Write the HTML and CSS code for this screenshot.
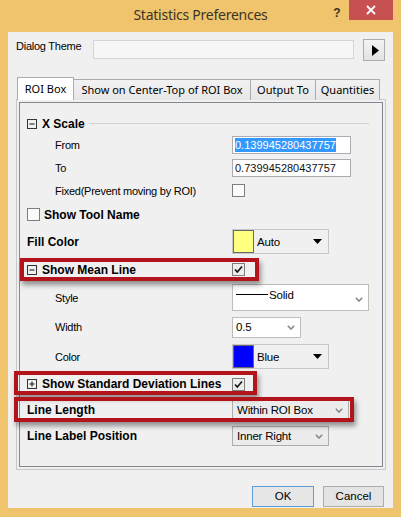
FILE: index.html
```html
<!DOCTYPE html>
<html>
<head>
<meta charset="utf-8">
<link rel="stylesheet" href="styles.css">
</head>
<body>
<div class="window">
  <div class="titlebar">
    <div class="title">Statistics Preferences</div>
    <div class="caption-btns">
      <div class="help">?</div>
      <div class="close"><svg width="10" height="10" viewBox="0 0 10 10"><path d="M1 1 L9 9 M9 1 L1 9" stroke="#fff" stroke-width="1.8"/></svg></div>
    </div>
  </div>
  <div class="client">
    <div class="theme-row">
      <div class="theme-label">Dialog Theme</div>
      <div class="theme-field"></div>
      <div class="theme-btn"><svg width="7" height="11" viewBox="0 0 7 11"><path d="M0 0 L7 5.5 L0 11 Z" fill="#000"/></svg></div>
    </div>
    <div class="tabs">
      <div class="tab tab-roi active">ROI Box</div>
      <div class="tab tab-show">Show on Center-Top of ROI Box</div>
      <div class="tab tab-output">Output To</div>
      <div class="tab tab-quant">Quantities</div>
    </div>
    <div class="tabpanel">
      <div class="panel">
        <div class="grid">
          <div class="row h20 group">
            <svg class="expander" width="10" height="10" viewBox="0 0 10 10"><rect x="0.5" y="0.5" width="9" height="9" fill="none" stroke="#333"/><path d="M2.5 5 H7.5" stroke="#111"/></svg>
            <span class="bold">X Scale</span>
            <span class="group-line"></span>
          </div>

          <div class="lbl indent h22">From</div>
          <div class="ctl h22"><div class="textbox"><span class="sel">0.139945280437757</span></div></div>

          <div class="lbl indent h23">To</div>
          <div class="ctl h23"><div class="textbox">0.739945280437757</div></div>

          <div class="lbl indent h23">Fixed(Prevent moving by ROI)</div>
          <div class="ctl h23"><span class="checkbox"></span></div>

          <div class="row h25 check-row">
            <span class="checkbox"></span>
            <span class="bold">Show Tool Name</span>
          </div>

          <div class="lbl bold h29">Fill Color</div>
          <div class="ctl h29">
            <div class="colorcombo"><span class="swatch swatch-yellow"></span><span class="combo-text">Auto</span><svg class="tri" width="9" height="5" viewBox="0 0 9 5"><path d="M0 0 H9 L4.5 5 Z" fill="#000"/></svg></div>
          </div>

          <div class="lbl h27 expand-label">
            <svg class="expander" width="10" height="10" viewBox="0 0 10 10"><rect x="0.5" y="0.5" width="9" height="9" fill="none" stroke="#333"/><path d="M2.5 5 H7.5" stroke="#111"/></svg>
            <span class="bold">Show Mean Line</span>
          </div>
          <div class="ctl h27"><span class="checkbox checked"><svg width="11" height="11" viewBox="0 0 11 11"><path d="M2 5.5 L4.3 8 L9 2.5" fill="none" stroke="#1a1a1a" stroke-width="1.7"/></svg></span></div>

          <div class="lbl indent h29">Style</div>
          <div class="ctl h29">
            <div class="combo combo-style"><span class="style-val"><span class="dash"></span>Solid</span><svg class="chev" width="8" height="5" viewBox="0 0 8 5"><path d="M0.8 0.8 L4 4 L7.2 0.8" fill="none" stroke="#888" stroke-width="1.6"/></svg></div>
          </div>

          <div class="lbl indent h30">Width</div>
          <div class="ctl h30">
            <div class="combo combo-width"><span class="combo-text">0.5</span><svg class="chev" width="8" height="5" viewBox="0 0 8 5"><path d="M0.8 0.8 L4 4 L7.2 0.8" fill="none" stroke="#888" stroke-width="1.6"/></svg></div>
          </div>

          <div class="lbl indent h29">Color</div>
          <div class="ctl h29">
            <div class="colorcombo"><span class="swatch swatch-blue"></span><span class="combo-text">Blue</span><svg class="tri" width="9" height="5" viewBox="0 0 9 5"><path d="M0 0 H9 L4.5 5 Z" fill="#000"/></svg></div>
          </div>

          <div class="lbl h26 expand-label">
            <svg class="expander" width="10" height="10" viewBox="0 0 10 10"><rect x="0.5" y="0.5" width="9" height="9" fill="none" stroke="#333"/><path d="M2.5 5 H7.5 M5 2.5 V7.5" stroke="#111"/></svg>
            <span class="bold">Show Standard Deviation Lines</span>
          </div>
          <div class="ctl h26"><span class="checkbox checked"><svg width="11" height="11" viewBox="0 0 11 11"><path d="M2 5.5 L4.3 8 L9 2.5" fill="none" stroke="#1a1a1a" stroke-width="1.7"/></svg></span></div>

          <div class="lbl bold h26">Line Length</div>
          <div class="ctl h26">
            <div class="combo combo-grey combo-len"><span class="combo-text">Within ROI Box</span><svg class="chev" width="8" height="5" viewBox="0 0 8 5"><path d="M0.8 0.8 L4 4 L7.2 0.8" fill="none" stroke="#888" stroke-width="1.6"/></svg></div>
          </div>

          <div class="lbl bold h26">Line Label Position</div>
          <div class="ctl h26">
            <div class="combo combo-grey combo-llp"><span class="combo-text">Inner Right</span><svg class="chev" width="8" height="5" viewBox="0 0 8 5"><path d="M0.8 0.8 L4 4 L7.2 0.8" fill="none" stroke="#888" stroke-width="1.6"/></svg></div>
          </div>
        </div>

        <div class="mark mark-mean"></div>
        <div class="mark mark-std"></div>
        <div class="mark mark-len"></div>
      </div>
    </div>
    <div class="buttons">
      <div class="btn btn-default">OK</div>
      <div class="btn">Cancel</div>
    </div>
  </div>
</div>
</body>
</html>
```

FILE: styles.css
```css
html, body {
  margin: 0;
  padding: 0;
}
body {
  width: 401px;
  height: 517px;
  overflow: hidden;
  background: #f0c46c;
  font-family: "Liberation Sans", Arial, sans-serif;
  font-size: 11px;
  color: #000;
}
.window {
  display: flex;
  flex-direction: column;
  height: 517px;
}
.titlebar {
  height: 32px;
  display: grid;
  grid-template-columns: 1fr auto 1fr;
  flex-shrink: 0;
}
.title {
  grid-column: 2;
  font-family: "Noto Sans", sans-serif;
  font-size: 14px;
  letter-spacing: -0.25px;
  line-height: 30px;
  color: #3b3424;
}
.caption-btns {
  grid-column: 3;
  justify-self: end;
  display: flex;
  align-items: flex-start;
  margin-right: 8px;
}
.help {
  width: 14px;
  margin-right: 5px;
  height: 24px;
  line-height: 26px;
  text-align: center;
  font-family: "Liberation Sans", sans-serif;
  font-weight: bold;
  font-size: 12px;
  color: #3a3222;
}
.close {
  width: 44px;
  height: 20px;
  background: #c75050;
  display: flex;
  align-items: center;
  justify-content: center;
}
.client {
  margin: 0 8px;
  height: 476px;
  background: #f0f0f0;
  display: flex;
  flex-direction: column;
}
.theme-row {
  display: flex;
  align-items: flex-start;
  padding: 7px 8px 0 8px;
  height: 22px;
}
.theme-label {
  width: 77px;
  padding-top: 1px;
  line-height: 13px;
  letter-spacing: -0.25px;
}
.theme-field {
  width: 262px;
  height: 19px;
  margin-top: 1px;
  box-sizing: border-box;
  border: 1px solid #d6d6d6;
  background: #f6f6f6;
}
.theme-btn {
  margin-left: 9px;
  width: 22px;
  height: 22px;
  box-sizing: border-box;
  border: 1px solid #acacac;
  background: linear-gradient(#f3f3f3, #e3e3e3);
  display: flex;
  align-items: center;
  justify-content: center;
  padding-left: 2px;
}
.tabs {
  display: flex;
  align-items: flex-end;
  margin-top: 16px;
  padding-left: 9px;
  height: 23px;
  margin-bottom: -1px;
  position: relative;
  z-index: 1;
}
.tab {
  box-sizing: border-box;
  height: 21px;
  border: 1px solid #acacac;
  border-bottom: none;
  background: linear-gradient(#f2f2f2, #e6e6e6);
  font-family: "Noto Sans", sans-serif;
  font-size: 11px;
  line-height: 19px;
  text-align: center;
  margin-left: -1px;
  color: #000;
}
.tab.active {
  height: 23px;
  line-height: 22px;
  background: #ffffff;
  margin-left: 0;
  position: relative;
  z-index: 2;
}
.tab-roi { width: 57px; }
.tab-show { width: 178px; }
.tab-output { width: 66px; }
.tab-quant { width: 65px; }
.tabpanel {
  margin-left: 8px;
  width: 370px;
  height: 371px;
  box-sizing: border-box;
  border: 1px solid #c9c9c9;
  padding: 2px;
  background: #f0f0f0;
}
.panel {
  position: relative;
  height: 100%;
  box-sizing: border-box;
  border: 1px solid #828790;
  padding: 11px 0 0 7px;
}
.grid {
  display: grid;
  grid-template-columns: 205px 150px;
}
.row {
  grid-column: 1 / -1;
  display: flex;
  align-items: center;
}
.lbl {
  display: flex;
  align-items: center;
  letter-spacing: -0.25px;
}
.ctl {
  display: flex;
  align-items: center;
}
.indent {
  padding-left: 28px;
}
.bold {
  font-weight: bold;
  font-size: 12px;
  letter-spacing: 0;
}
.h20 { height: 20px; }
.h22 { height: 22px; }
.h23 { height: 23px; }
.h25 { height: 25px; }
.h26 { height: 26px; }
.h27 { height: 27px; }
.h29 { height: 29px; }
.h30 { height: 30px; }
.expander {
  display: block;
  margin-right: 5px;
  flex-shrink: 0;
}
.group-line {
  flex: 1;
  height: 0;
  border-top: 1px solid #d2d2d2;
  margin-left: 4px;
  margin-right: 13px;
  margin-top: -1px;
}
.check-row .checkbox {
  margin-right: 4px;
}
.checkbox {
  display: inline-flex;
  align-items: center;
  justify-content: center;
  width: 13px;
  height: 13px;
  box-sizing: border-box;
  border: 1px solid #7d7d7d;
  background: #fbfbfb;
}
.checkbox.checked {
  background: #ececec;
}
.textbox {
  width: 119px;
  height: 18px;
  box-sizing: border-box;
  border: 1px solid #abadb3;
  background: #fff;
  padding: 1px 0 0 2px;
  line-height: 14px;
  letter-spacing: 0;
  color: #111;
}
.sel {
  background: #3399ff;
  color: #fff;
  display: inline-block;
  line-height: 14px;
}
.colorcombo {
  width: 97px;
  height: 25px;
  box-sizing: border-box;
  border: 1px solid #c6c6c6;
  background: #f0f0f0;
  display: flex;
  align-items: center;
  padding-right: 6px;
}
.swatch {
  width: 21px;
  height: 23px;
  box-sizing: border-box;
  border: 1px solid #6b6b6b;
  margin-right: 3px;
}
.swatch-yellow { background: #ffff80; }
.swatch-blue { background: #0000ff; }
.combo-text {
  flex: 1;
  letter-spacing: -0.2px;
  font-size: 11.5px;
}
.tri {
  display: block;
}
.combo {
  box-sizing: border-box;
  border: 1px solid #bdbdbd;
  background: #fff;
  display: flex;
  align-items: center;
  padding-left: 3px;
  padding-right: 5px;
}
.chev {
  display: block;
  flex-shrink: 0;
}
.combo-style {
  width: 137px;
  height: 27px;
  align-items: stretch;
}
.combo-style .chev {
  align-self: center;
  margin-top: 3px;
}
.style-val {
  flex: 1;
  display: flex;
  align-items: center;
  height: 17px;
  margin-top: 1px;
  font-size: 11.5px;
  letter-spacing: -0.2px;
}
.dash {
  width: 32px;
  height: 1px;
  background: #000;
  margin-right: 1px;
}
.combo-width {
  width: 69px;
  height: 21px;
}
.combo-grey {
  background: #ececec;
  border-color: #adadad;
}
.combo-len {
  width: 117px;
  height: 20px;
  padding-left: 4px;
}
.combo-llp {
  width: 97px;
  height: 20px;
  padding-left: 4px;
}
.mark {
  position: absolute;
  box-sizing: border-box;
  border: 4px solid #b3131b;
  box-shadow: 2px 4px 5px rgba(0, 0, 0, 0.4);
}
.mark-mean {
  left: 0;
  top: 155px;
  width: 239px;
  height: 23px;
}
.mark-std {
  left: -6px;
  top: 268px;
  width: 243px;
  height: 24px;
}
.mark-len {
  left: -6px;
  top: 294px;
  width: 340px;
  height: 25px;
}
.buttons {
  display: flex;
  justify-content: flex-end;
  gap: 9px;
  margin-top: 16px;
  padding-right: 9px;
}
.btn {
  width: 61px;
  height: 21px;
  box-sizing: border-box;
  border: 1px solid #adadad;
  background: #e4e4e4;
  text-align: center;
  line-height: 19px;
  font-size: 11.5px;
}
.btn-default {
  width: 62px;
  border-color: #5d9fd9;
  background: #e6e6e6;
}
```
